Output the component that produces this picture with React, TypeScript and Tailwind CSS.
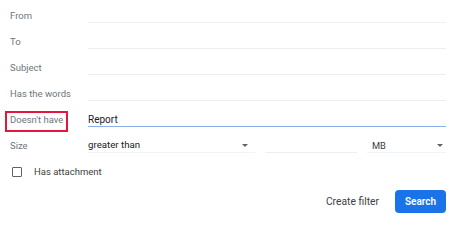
import React from 'react'

const font = { fontFamily: 'Roboto, "Liberation Sans", Arial, sans-serif' }

function Caret() {
  return (
    <svg width="6" height="3" viewBox="0 0 6 3" className="shrink-0">
      <path d="M0 0 L6 0 L3 3 Z" fill="#5f6368" />
    </svg>
  )
}

function Row({ label, value, active, boxed }: { label: string; value?: string; active?: boolean; boxed?: boolean }) {
  return (
    <div className="relative flex items-center h-[26px]">
      <div className="w-[88px] shrink-0 pl-[10px] pt-[1px] text-[9.5px] text-[#70757a]">{label}</div>
      <div
        className={`flex-1 h-[14px] flex items-center text-[10px] text-[#202124] border-b ${
          active ? 'border-[#8ab0ec]' : 'border-[#eceef0]'
        }`}
      >
        {value}
      </div>
      {boxed && (
        <div className="absolute left-[5px] top-[4px] w-[63px] h-[21px] border-2 border-[#e3173e]" />
      )}
    </div>
  )
}

export default function App() {
  return (
    <div className="w-[450px] h-[229px] bg-white pt-[3px] pr-[4px]" style={font}>
      <Row label="From" />
      <Row label="To" />
      <Row label="Subject" />
      <Row label="Has the words" />
      <Row label="Doesn't have" value="Report" active boxed />

      <div className="flex items-center h-[26px]">
        <div className="w-[88px] shrink-0 pl-[10px] pt-[1px] text-[9.5px] text-[#70757a]">Size</div>
        <div className="w-[167px] h-[14px] flex items-center justify-between pr-[7px] text-[9.7px] text-[#202124] border-b border-[#f1f3f4]">
          <span>greater than</span>
          <Caret />
        </div>
        <div className="ml-[10px] w-[92px] h-[14px] border-b border-[#eceef0]" />
        <div className="ml-[10px] flex-1 h-[14px] flex items-center justify-between pl-[5px] pr-[3px] text-[9.3px] text-[#3c4043] border-b border-[#f1f3f4]">
          <span>MB</span>
          <Caret />
        </div>
      </div>

      <div className="flex items-center h-[26px] pl-[12px]">
        <div className="w-[10px] h-[10px] border-[1.5px] border-[#5f6368] rounded-[1px]" />
        <span className="ml-[12px] pt-[1px] text-[9.5px] text-[#3c4043]">Has attachment</span>
      </div>

      <div className="flex items-center justify-end mt-[5px]">
        <button className="text-[10.3px] text-[#3c4043] mr-[16px]">Create filter</button>
        <button className="w-[51px] h-[23px] rounded-[4px] bg-[#1a73e8] text-white text-[10px] font-semibold">
          Search
        </button>
      </div>
    </div>
  )
}
